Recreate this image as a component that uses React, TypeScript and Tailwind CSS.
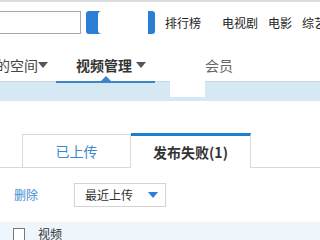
const Caret = ({ color = "#555" }: { color?: string }) => (
  <svg width="10" height="6" viewBox="0 0 10 6" className="shrink-0">
    <path d="M0 0 H10 L5 6 Z" fill={color} />
  </svg>
)

export default function App() {
  return (
    <div className="relative w-[320px] h-[240px] overflow-hidden bg-white text-[#333] font-['Noto_Sans_CJK_SC',sans-serif]">
      {/* top bar */}
      <div className="h-[45px] border-t-[2px] border-[#dcdcdc] bg-white flex items-start pt-[9px]">
        <div className="-ml-[20px] w-[101px] h-[23px] border border-[#a8a8a8] bg-white shrink-0" />
        <div className="relative ml-[5px] w-[69px] h-[23px] rounded-[3px] bg-[#2a7fd5] shrink-0">
          <div className="absolute left-[12px] top-0 w-[50px] h-[23px] bg-white rounded-l-[4px]" />
        </div>
        <div className="ml-[10px] flex h-[23px] items-center text-[12px] leading-none whitespace-nowrap text-[#222]">
          <span>排行榜</span>
          <span className="ml-[21px]">电视剧</span>
          <span className="ml-[10px]">电影</span>
          <span className="ml-[10px]">综艺</span>
        </div>
      </div>

      {/* main nav */}
      <div className="h-[36px] flex items-start pt-[13px] text-[14px] leading-[14px] whitespace-nowrap">
        <span className="-ml-[4px] text-[#444]">的空间</span>
        <span className="ml-[0px] mt-[4px]"><Caret /></span>
        <span className="ml-[28px] font-bold text-[#333]">视频管理</span>
        <span className="ml-[4px] mt-[4px]"><Caret /></span>
        <span className="ml-[59px] text-[#666]">会员</span>
      </div>

      {/* sub band */}
      <div className="relative h-[20px] border-t border-[#c9d6df] bg-[#d5e8f4]">
        <div className="absolute -top-px left-[56px] w-[99px] h-[2px] bg-[#3d86c6]" />
        <svg width="10" height="5" viewBox="0 0 10 5" className="absolute -top-[6px] left-[101px]">
          <path d="M0 5 L5 0 L10 5 Z" fill="#3d86c6" />
        </svg>
      </div>

      {/* redaction block */}
      <div className="absolute left-[170px] top-[42px] w-[35px] h-[55px] bg-white" />

      {/* tabs */}
      <div className="mt-[32px] flex h-[35px] border-b border-[#d9d9d9] pl-[22px]">
        <div className="mt-[1px] h-[33px] w-[109px] border border-b-0 border-[#d9d9d9] flex items-center justify-center text-[14px] text-[#3b87cf]">
          已上传
        </div>
        <div className="h-[35px] w-[120px] border-t-[3px] border-t-[#1a7fd0] border-r border-r-[#d9d9d9] bg-white flex items-center justify-center text-[14px] font-bold text-[#333]">
          发布失败(1)
        </div>
      </div>

      {/* actions */}
      <div className="h-[54px] flex items-center text-[12px]">
        <span className="ml-[14px] text-[#3d8bd0]">删除</span>
        <div className="ml-[36px] w-[92px] h-[24px] border border-[#d4d4d4] flex items-center justify-between pl-[10px] pr-[7px] text-[#333]">
          <span>最近上传</span>
          <Caret color="#2b7fd6" />
        </div>
      </div>

      {/* list header */}
      <div className="h-[18px] bg-[#eef5fb] flex items-start pt-[6px] text-[12px]">
        <div className="ml-[13px] w-[12px] h-[13px] border border-[#777] bg-white" />
        <span className="ml-[13px] leading-[12px] text-[#333]">视频</span>
      </div>
    </div>
  )
}
